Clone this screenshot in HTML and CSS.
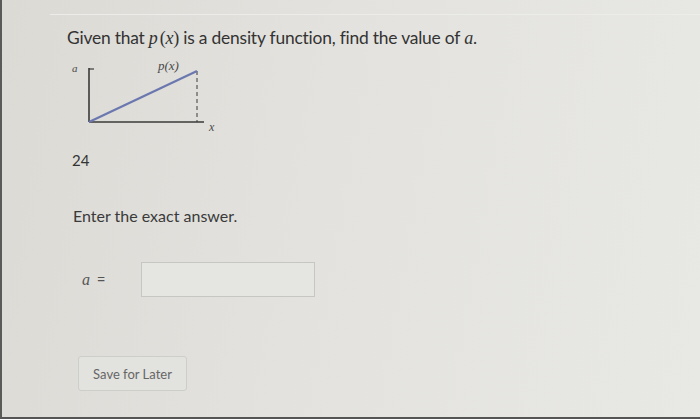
FILE: index.html
```html
<!DOCTYPE html>
<html>
<head>
<meta charset="utf-8">
<link rel="stylesheet" href="styles.css">
</head>
<body>
<div class="screen">
  <div class="page">
    <p class="question">Given that <span class="math">p</span>&thinsp;<span class="paren">(</span><span class="math">x</span><span class="paren">)</span> is a density function, find the value of <span class="math">a</span>.</p>
    <div class="figure">
      <svg width="160" height="86" viewBox="0 0 160 86">
        <text x="11" y="20" class="svgmath" font-size="11">a</text>
        <text x="97" y="18" class="svgmath" font-size="13">p(x)</text>
        <text x="148" y="79" class="svgmath" font-size="12">x</text>
        <line x1="28" y1="16" x2="28" y2="70" stroke="#3a3a3a" stroke-width="1.6"/>
        <line x1="28" y1="17" x2="33" y2="17" stroke="#3a3a3a" stroke-width="1.2"/>
        <line x1="28" y1="70" x2="143" y2="70" stroke="#3a3a3a" stroke-width="1.6"/>
        <line x1="136" y1="19" x2="136" y2="70" stroke="#3a3a3a" stroke-width="1" stroke-dasharray="4 3"/>
        <line x1="28" y1="70" x2="136" y2="19" stroke="#6b78b0" stroke-width="2.2"/>
      </svg>
    </div>
    <p class="number">24</p>
    <p class="instr">Enter the exact answer.</p>
    <div class="answer">
      <span class="label"><span class="math">a</span> =</span>
      <div class="input"></div>
    </div>
    <div class="btn">Save for Later</div>
  </div>
</div>
</body>
</html>
```
FILE: styles.css
```css
html, body {
  margin: 0;
  padding: 0;
  width: 700px;
  height: 419px;
  overflow: hidden;
  background: #dfded9;
}
.screen {
  width: 698px;
  height: 403px;
  padding-top: 14px;
  border-left: 2px solid #5a5a58;
  border-bottom: 2px solid #555;
  background: linear-gradient(100deg, #dbdad5 0%, #e3e2de 45%, #e8e8e5 100%);
}
.page {
  margin-left: 48px;
  border-top: 1px solid #ececea;
  padding: 12px 0 0 17px;
  font-family: Lato, "Open Sans", sans-serif;
  color: #333;
}
.question {
  margin: 0;
  font-size: 17.4px;
  letter-spacing: -0.2px;
  line-height: 22px;
}
.math {
  font-family: "Liberation Serif", "DejaVu Serif", serif;
  font-style: italic;
  font-size: 18px;
}
.paren {
  font-family: "Liberation Serif", serif;
  font-size: 18px;
}
.svgmath {
  font-family: "Liberation Serif", serif;
  font-style: italic;
  fill: #4a4a4a;
}
.figure {
  margin: 3px 0 0 -6px;
  height: 86px;
}
.number {
  margin: 13px 0 0 5px;
  font-size: 15px;
}
.instr {
  margin: 37px 0 0 6px;
  font-size: 16px;
  color: #3a3a3a;
}
.answer {
  margin-top: 36px;
  display: flex;
  align-items: center;
  height: 36px;
}
.label {
  margin-left: 15px;
  width: 59px;
  font-size: 15px;
  color: #555;
  word-spacing: 3px;
}
.label .math { font-size: 16px; }
.input {
  width: 172px;
  height: 33px;
  border: 1px solid #c6c6c2;
  background: #e5e5e2;
}
.btn {
  margin: 59px 0 0 11px;
  width: 107px;
  height: 33px;
  border: 1px solid #cdcdc9;
  border-radius: 3px;
  background: #e2e2de;
  font-size: 13px;
  color: #666;
  display: flex;
  align-items: center;
  justify-content: center;
}
```
